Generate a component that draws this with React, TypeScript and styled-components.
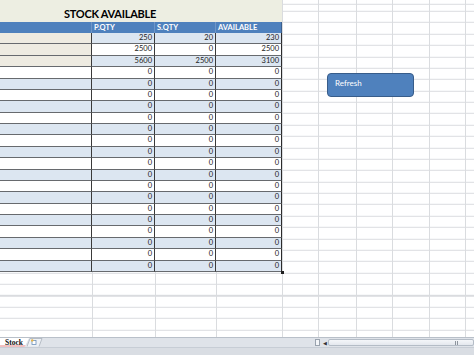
import React from "react";
import styled, { createGlobalStyle } from "styled-components";

const GlobalStyle = createGlobalStyle`
  html, body {
    margin: 0;
    padding: 0;
    overflow: hidden;
    background: #ffffff;
  }
  body {
    font-family: Lato, "Open Sans", "Liberation Sans", sans-serif;
  }
`;

const ROW_H = 11.38;
const gridX = [92, 155, 216, 282, 318, 356, 392, 429, 465];

// vertical sheet gridlines, drawn as one hard-stop gradient
const verticalLines = `linear-gradient(to right, ${gridX
  .map((x) => `transparent ${x}px, #dadcdf ${x}px, #dadcdf ${x + 1}px, transparent ${x + 1}px`)
  .join(", ")})`;

const rows = [
  [250, 20, 230],
  [2500, 0, 2500],
  [5600, 2500, 3100],
  ...Array.from({ length: 18 }, () => [0, 0, 0]),
];

const Window = styled.div`
  width: 474px;
  height: 355px;
  display: flex;
  flex-direction: column;
  overflow: hidden;
`;

const Sheet = styled.div`
  position: relative;
  flex: 1;
  background-color: #ffffff;
  background-image: ${verticalLines},
    repeating-linear-gradient(
      to bottom,
      #dadcdf 0px,
      #dadcdf 1px,
      transparent 1px,
      transparent ${ROW_H}px
    );
  background-position: 0 0, 0 10.8px;
`;

const Table = styled.div`
  display: grid;
  grid-template-columns: 92px 63px 61px 66px;
  grid-template-rows: 22px 11px repeat(${rows.length}, ${ROW_H}px);
  width: 282px;
  position: relative;

  &::after {
    content: "";
    position: absolute;
    right: -2px;
    bottom: -2px;
    width: 3px;
    height: 3px;
    background: #1f1f1f;
  }
`;

const Title = styled.div`
  grid-column: 1 / span 3;
  background: #edeee2;
  display: flex;
  align-items: flex-end;
  justify-content: center;
  padding: 0 0 2px 4px;
  font-weight: 700;
  font-size: 11px;
  color: #000;
  letter-spacing: -0.25px;
`;

const TitleFill = styled.div`
  background: #edeee2;
`;

const HeadCell = styled.div<{ $last?: boolean }>`
  background: #4f81bd;
  color: #ffffff;
  font-weight: 700;
  font-size: 7.5px;
  line-height: 11px;
  padding-left: 2px;
  border-right: 1px solid ${(p) => (p.$last ? "#3b5f8c" : "#6f97c8")};
`;

const Cell = styled.div<{ $bg: string; $last?: boolean }>`
  background: ${(p) => p.$bg};
  border-bottom: 1px solid #676a6e;
  border-right: 1px solid ${(p) => (p.$last ? "#2b2b2b" : "#3a3a3a")};
  font-size: 7.5px;
  color: #222;
  text-align: right;
  padding-right: 2px;
  line-height: ${ROW_H - 1}px;
  box-sizing: border-box;
`;

const RefreshButton = styled.div`
  position: absolute;
  left: 327px;
  top: 73px;
  width: 87px;
  height: 24px;
  box-sizing: border-box;
  background: #4f81bd;
  border: 1px solid #385d8a;
  border-radius: 4px;
  color: #ffffff;
  font-size: 8px;
  padding: 4px 0 0 7px;
`;

const TabBar = styled.div`
  height: 9px;
  display: flex;
  align-items: stretch;
  background: #dfe3e9;
  border-top: 1px solid #b9c0c9;
`;

const SheetTab = styled.div`
  width: 29px;
  background: #ffffff;
  font-size: 7.5px;
  font-weight: 700;
  font-family: "Liberation Serif", serif;
  padding-left: 5px;
  box-sizing: border-box;
  line-height: 9px;
  color: #111;
  clip-path: polygon(0 0, 100% 0, 85% 100%, 0 100%);
  box-shadow: inset 0 -2px 0 #f1c0c0;
`;

const NewTab = styled.div`
  width: 18px;
  display: flex;
  align-items: center;
  margin-left: -2px;
`;

const TabSpacer = styled.div`
  flex: 1;
`;

const Splitter = styled.div`
  width: 3px;
  margin: 1px 2px;
  border: 1px solid #9aa3ae;
  background: #f3f5f8;
`;

const ArrowBtn = styled.div`
  width: 6px;
  display: flex;
  align-items: center;
  justify-content: center;
  font-size: 5px;
  color: #333;
`;

const Track = styled.div`
  width: 146px;
  display: flex;
  align-items: center;
  justify-content: flex-end;
  margin: 1px 0;
  background: linear-gradient(#f4f6f9, #e4e8ee);
  border: 1px solid #b4bcc6;
  border-radius: 2px;
  padding-right: 14px;
  box-sizing: border-box;
`;

const Grip = styled.div`
  width: 4px;
  height: 4px;
  background: repeating-linear-gradient(to right, #8e959e 0 1px, transparent 1px 2px);
`;

const StatusBar = styled.div`
  height: 7px;
  background: #d9dde3;
  border-top: 1px solid #c7cdd5;
`;

const rowBg = (i: number) => (i % 2 === 0 ? "#dce6f1" : "#ffffff");

export default function App() {
  return (
    <Window>
      <GlobalStyle />
      <Sheet>
        <Table>
          <Title>STOCK AVAILABLE</Title>
          <TitleFill />
          <HeadCell />
          <HeadCell>P.QTY</HeadCell>
          <HeadCell>S.QTY</HeadCell>
          <HeadCell $last>AVAILABLE</HeadCell>
          {rows.map((r, i) => (
            <React.Fragment key={i}>
              <Cell $bg={i < 3 ? "#eeebe1" : rowBg(i)} />
              <Cell $bg={rowBg(i)}>{r[0]}</Cell>
              <Cell $bg={rowBg(i)}>{r[1]}</Cell>
              <Cell $bg={rowBg(i)} $last>
                {r[2]}
              </Cell>
            </React.Fragment>
          ))}
        </Table>
        <RefreshButton>Refresh</RefreshButton>
      </Sheet>
      <TabBar>
        <SheetTab>Stock</SheetTab>
        <NewTab>
          <svg width="16" height="9" viewBox="0 0 16 9">
            <path d="M0 8.5 L3 0.5 L15 0.5 L12 8.5" fill="#eef1f5" stroke="#a9b1bb" strokeWidth="0.8" />
            <rect x="5" y="2.5" width="4" height="4" fill="#ffffff" stroke="#6a8fb9" strokeWidth="0.8" />
            <circle cx="5.2" cy="2.4" r="1.2" fill="#e8b545" />
          </svg>
        </NewTab>
        <TabSpacer />
        <Splitter />
        <ArrowBtn>◀</ArrowBtn>
        <Track>
          <Grip />
        </Track>
      </TabBar>
      <StatusBar />
    </Window>
  );
}
